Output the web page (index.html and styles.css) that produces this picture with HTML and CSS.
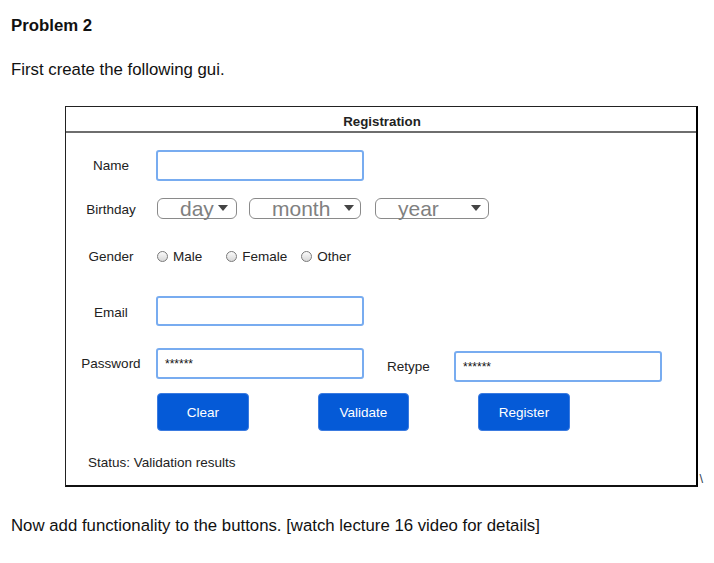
FILE: index.html
```html
<!DOCTYPE html>
<html>
<head>
<meta charset="utf-8">
<link rel="stylesheet" href="styles.css">
</head>
<body>
<h2 class="title">Problem 2</h2>
<p class="intro">First create the following gui.</p>
<div class="frame">
  <div class="frame-head">Registration</div>
  <div class="frame-body">
    <div class="row row-name">
      <span class="lbl">Name</span>
      <div class="field"></div>
    </div>
    <div class="row row-birth">
      <span class="lbl">Birthday</span>
      <div class="selects">
        <div class="sel sel-day"><span>day</span><svg class="arr" width="10" height="6" viewBox="0 0 10 6"><path d="M0 0H10L5 6Z" fill="#444"/></svg></div>
        <div class="sel sel-month"><span>month</span><svg class="arr" width="10" height="6" viewBox="0 0 10 6"><path d="M0 0H10L5 6Z" fill="#444"/></svg></div>
        <div class="sel sel-year"><span>year</span><svg class="arr" width="10" height="6" viewBox="0 0 10 6"><path d="M0 0H10L5 6Z" fill="#444"/></svg></div>
      </div>
    </div>
    <div class="row row-gender">
      <span class="lbl">Gender</span>
      <div class="radios">
        <span class="radio r-male"><i class="dot"></i>Male</span>
        <span class="radio r-female"><i class="dot"></i>Female</span>
        <span class="radio r-other"><i class="dot"></i>Other</span>
      </div>
    </div>
    <div class="row row-email">
      <span class="lbl">Email</span>
      <div class="field"></div>
    </div>
    <div class="row row-pass">
      <span class="lbl">Password</span>
      <div class="field pw">******</div>
      <div class="retype">
        <span class="rlbl">Retype</span>
        <div class="field pw">******</div>
      </div>
    </div>
    <div class="row row-btns">
      <button class="btn b-clear">Clear</button>
      <button class="btn b-validate">Validate</button>
      <button class="btn b-register">Register</button>
    </div>
    <div class="row row-status">Status: Validation results</div>
  </div>
  <span class="stray">\</span>
</div>
<p class="outro">Now add functionality to the buttons. [watch lecture 16 video for details]</p>
</body>
</html>
```
FILE: styles.css
```css
* { box-sizing: border-box; }
body {
  margin: 0;
  padding: 16px 0 0 0;
  font-family: "Liberation Sans", Arial, sans-serif;
  color: #111;
  background: #fff;
}
.title {
  margin: 0 0 0 11px;
  font-size: 16.8px;
  line-height: 19px;
  font-weight: bold;
}
.intro {
  margin: 25px 0 0 11px;
  font-size: 16.8px;
  line-height: 19px;
}
.frame {
  position: relative;
  margin: 27px 0 0 65px;
  width: 633px;
  height: 381px;
  border-top: 1px solid #222;
  border-left: 1px solid #222;
  border-right: 2px solid #000;
  border-bottom: 2px solid #111;
  font-size: 13.5px;
  color: #222;
}
.frame-head {
  height: 26px;
  border-bottom: 2px solid #6e6e6e;
  text-align: center;
  font-weight: bold;
  font-size: 13.3px;
  line-height: 16px;
  padding-top: 7px;
  padding-left: 2px;
}
.frame-body {
  padding: 16px 0 0 6px;
}
.row {
  display: flex;
  align-items: center;
}
.lbl {
  width: 78px;
  text-align: center;
  margin-right: 6px;
  flex: none;
}
.row-name { height: 33px; }
.row-name .lbl { margin-top: -1px; }
.row-birth { height: 52px; }
.row-birth .lbl { margin-top: 2px; }
.row-gender { height: 44px; }
.row-email { height: 66px; }
.row-email .lbl { margin-top: 3px; }
.row-pass { height: 39px; }
.row-btns { height: 58px; padding-left: 85px; }
.row-status { height: 42px; padding-left: 16px; }

.field {
  width: 208px;
  height: 31px;
  border: 2px solid #78acf0;
  border-radius: 3px;
  background: #fff;
  flex: none;
}
.row-email .field { height: 30px; }
.pw {
  display: flex;
  align-items: center;
  padding-left: 7px;
  font-size: 12px;
  color: #111;
}
.retype {
  display: flex;
  align-items: center;
  margin-top: 6px;
  margin-left: 23px;
}
.rlbl {
  width: 67px;
  flex: none;
}

.selects {
  display: flex;
  align-items: center;
  margin-left: 1px;
}
.sel {
  display: flex;
  align-items: center;
  height: 21px;
  border: 1px solid #8a8a8a;
  border-radius: 6px;
  color: #808080;
  font-size: 21px;
  padding-left: 22px;
}
.sel span { line-height: 21px; margin-top: 1px; }
.arr { margin-left: auto; flex: none; }
.sel-day { width: 80px; padding-right: 8px; }
.sel-month { width: 112px; margin-left: 12px; padding-right: 6px; }
.sel-year { width: 114px; margin-left: 14px; padding-right: 7px; }

.radios {
  display: flex;
  align-items: center;
  margin-left: 1px;
  font-size: 13.5px;
}
.radio {
  display: inline-flex;
  align-items: center;
}
.dot {
  width: 11px;
  height: 11px;
  border-radius: 50%;
  border: 1px solid #7a7a7a;
  background: linear-gradient(#fbfbfb, #d8d8d8);
  margin-right: 5px;
}
.r-female { margin-left: 24px; }
.r-other { margin-left: 14px; }

.btn {
  width: 92px;
  height: 38px;
  border: 1px solid #3b7be0;
  border-radius: 4px;
  background: #055ad7;
  color: #fff;
  font-family: "Liberation Sans", Arial, sans-serif;
  font-size: 13.5px;
  padding: 0;
  flex: none;
}
.b-validate { margin-left: 69px; width: 91px; }
.b-register { margin-left: 69px; }

.stray {
  position: absolute;
  right: -7px;
  bottom: 0px;
  font-size: 13px;
  color: #345;
  line-height: 13px;
}
.outro {
  margin: 29px 0 0 11px;
  font-size: 16.8px;
  line-height: 19px;
}
```
